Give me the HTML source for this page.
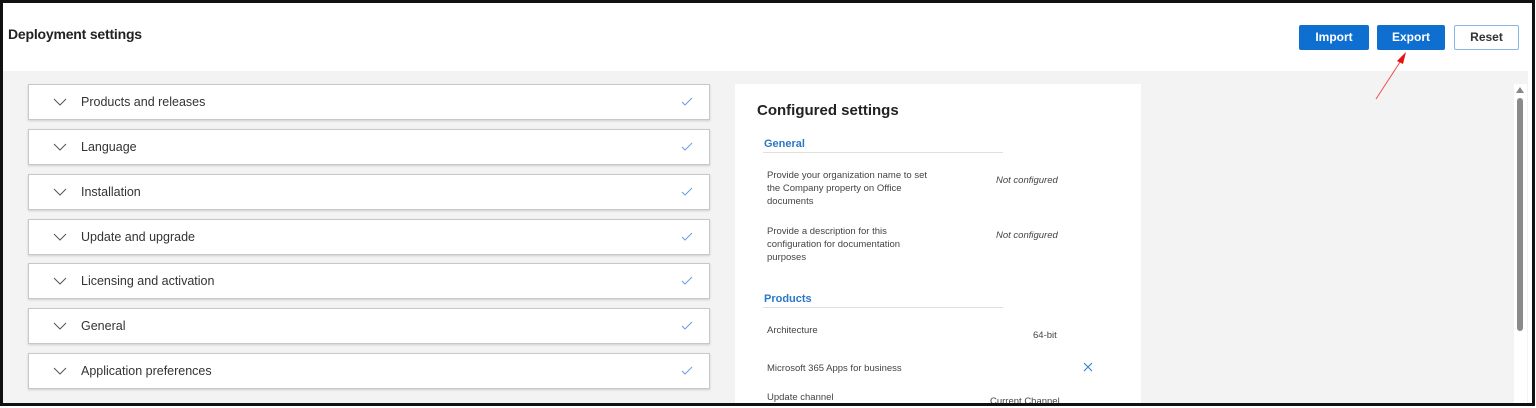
<!DOCTYPE html>
<html><head><style>
*{margin:0;padding:0;box-sizing:border-box}
body{width:1536px;height:407px;overflow:hidden;background:#fff;font-family:"Liberation Sans",sans-serif;position:relative;color:#323130}
.frame{position:absolute;left:0;top:0;width:1535px;height:406px;border:3px solid #111;border-right-width:3px}
.gray{position:absolute;left:3px;top:71px;width:1525px;height:332px;background:#f3f3f3}
h1{position:absolute;left:8px;top:26px;font-size:14px;font-weight:bold;color:#222;letter-spacing:-0.2px}
.btn{position:absolute;top:25px;height:25px;font-size:12px;font-weight:bold;text-align:center;line-height:25px;border-radius:2px}
.b{background:#0f6fd1;color:#fff}
.w{background:#fff;border:1px solid #8ab6e6;color:#333;line-height:23px}
.row{position:absolute;left:28px;width:682px;height:36px;background:#fff;border:1px solid #c8c8c8;box-shadow:0 1px 2px rgba(0,0,0,.15)}
.row span{position:absolute;left:52px;top:10px;font-size:12.5px;color:#333}
.row svg.c{position:absolute;left:24px;top:13px}
.row svg.k{position:absolute;right:16px;top:12px}
.panel{position:absolute;left:735px;top:84px;width:406px;height:319px;background:#fff}
.p{position:absolute;font-size:9.5px;color:#444;line-height:13px}
.i{font-style:italic}
.sec{position:absolute;left:764px;font-size:11px;font-weight:bold;color:#2a78c8}
.ln{position:absolute;left:763px;width:240px;height:1px;background:#e0e0e0}
</style></head><body>
<div class="gray"></div>
<h1>Deployment settings</h1>
<div class="btn b" style="left:1299px;width:70px">Import</div>
<div class="btn b" style="left:1377px;width:68px">Export</div>
<div class="btn w" style="left:1454px;width:65px">Reset</div>
<svg style="position:absolute;left:1370px;top:45px" width="45" height="60"><line x1="6" y1="54" x2="32" y2="14" stroke="#f05050" stroke-width="1"/><polygon points="36,7 27,16 33,19" fill="#e81010"/></svg>

<div class="row" style="top:84px"><svg class="c" width="14" height="8"><path d="M1 1L7 7L13 1" fill="none" stroke="#555" stroke-width="1"/></svg><span>Products and releases</span><svg class="k" width="12" height="10"><path d="M1 5L4 8L11 1" fill="none" stroke="#6a9fe0" stroke-width="1"/></svg></div>
<div class="row" style="top:129px"><svg class="c" width="14" height="8"><path d="M1 1L7 7L13 1" fill="none" stroke="#555" stroke-width="1"/></svg><span>Language</span><svg class="k" width="12" height="10"><path d="M1 5L4 8L11 1" fill="none" stroke="#6a9fe0" stroke-width="1"/></svg></div>
<div class="row" style="top:174px"><svg class="c" width="14" height="8"><path d="M1 1L7 7L13 1" fill="none" stroke="#555" stroke-width="1"/></svg><span>Installation</span><svg class="k" width="12" height="10"><path d="M1 5L4 8L11 1" fill="none" stroke="#6a9fe0" stroke-width="1"/></svg></div>
<div class="row" style="top:219px"><svg class="c" width="14" height="8"><path d="M1 1L7 7L13 1" fill="none" stroke="#555" stroke-width="1"/></svg><span>Update and upgrade</span><svg class="k" width="12" height="10"><path d="M1 5L4 8L11 1" fill="none" stroke="#6a9fe0" stroke-width="1"/></svg></div>
<div class="row" style="top:263px"><svg class="c" width="14" height="8"><path d="M1 1L7 7L13 1" fill="none" stroke="#555" stroke-width="1"/></svg><span>Licensing and activation</span><svg class="k" width="12" height="10"><path d="M1 5L4 8L11 1" fill="none" stroke="#6a9fe0" stroke-width="1"/></svg></div>
<div class="row" style="top:308px"><svg class="c" width="14" height="8"><path d="M1 1L7 7L13 1" fill="none" stroke="#555" stroke-width="1"/></svg><span>General</span><svg class="k" width="12" height="10"><path d="M1 5L4 8L11 1" fill="none" stroke="#6a9fe0" stroke-width="1"/></svg></div>
<div class="row" style="top:353px"><svg class="c" width="14" height="8"><path d="M1 1L7 7L13 1" fill="none" stroke="#555" stroke-width="1"/></svg><span>Application preferences</span><svg class="k" width="12" height="10"><path d="M1 5L4 8L11 1" fill="none" stroke="#6a9fe0" stroke-width="1"/></svg></div>

<div class="panel"></div>
<div style="position:absolute;left:757px;top:102px;font-size:15px;font-weight:bold;color:#222">Configured settings</div>
<div class="sec" style="top:138px">General</div><div class="ln" style="top:152px"></div>
<div class="p" style="left:767px;top:169px;width:175px">Provide your organization name to set the Company property on Office documents</div>
<div class="p i" style="left:996px;top:174px">Not configured</div>
<div class="p" style="left:767px;top:225px;width:150px">Provide a description for this configuration for documentation purposes</div>
<div class="p i" style="left:996px;top:229px">Not configured</div>
<div class="sec" style="top:293px">Products</div><div class="ln" style="top:307px"></div>
<div class="p" style="left:767px;top:324px">Architecture</div>
<div class="p" style="left:1033px;top:329px">64-bit</div>
<div class="p" style="left:767px;top:362px">Microsoft 365 Apps for business</div>
<svg style="position:absolute;left:1083px;top:362px" width="10" height="10"><path d="M1 1L9 9M9 1L1 9" stroke="#3a86d8" stroke-width="1.2"/></svg>
<div class="p" style="left:767px;top:391px">Update channel</div>
<div class="p" style="left:990px;top:395px">Current Channel</div>

<div style="position:absolute;left:1514px;top:84px;width:13px;height:319px;background:#fff"></div>
<svg style="position:absolute;left:1516px;top:87px" width="8" height="6"><polygon points="4,0 8,6 0,6" fill="#888"/></svg>
<div style="position:absolute;left:1517px;top:98px;width:6px;height:233px;background:#8a8a8a;border-radius:3px"></div>
<div class="frame"></div>
</body></html>
